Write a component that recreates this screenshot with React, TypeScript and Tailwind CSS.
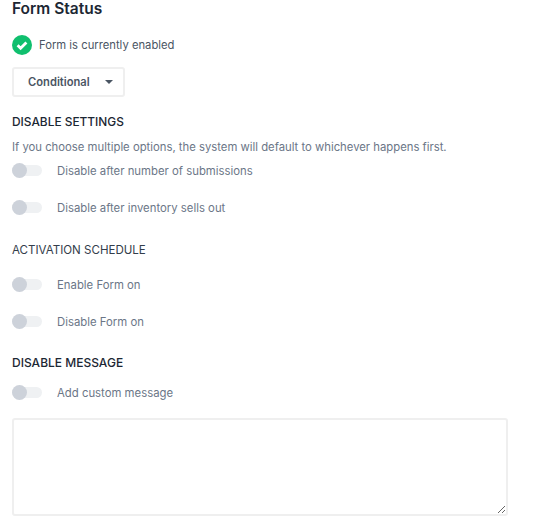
function Toggle({ label, className }: { label: string; className: string }) {
  return (
    <div className={`flex h-[16px] ${className}`}>
      <span className="relative block mt-[2px] w-[30px] h-[11px] rounded-full bg-[#eff1f3]">
        <span className="absolute left-0 top-[-2px] w-[15px] h-[15px] rounded-full bg-[#cdd2da]" />
      </span>
      <span className="ml-[15px] text-[11.35px] leading-[16px] text-[#6b7687]">{label}</span>
    </div>
  );
}

export default function App() {
  return (
    <div className="w-[547px] h-[530px] overflow-hidden bg-white pl-[12px] font-['Inter','Liberation_Sans',sans-serif]">
      <h1 className="pt-[1px] h-[20px] text-[15.5px] leading-[16px] font-semibold text-[#1c2733]">Form Status</h1>
      <div className="mt-[15px] flex items-center h-[20px]">
        <svg width="20" height="20" viewBox="0 0 20 20">
          <circle cx="10" cy="10" r="10" fill="#10bf6e" />
          <path d="M5.6 10.2 8.6 13.2 14.4 7.4" fill="none" stroke="#fff" strokeWidth="2.8" />
        </svg>
        <span className="ml-[7px] text-[11.25px] leading-[16px] text-[#4a5563]">Form is currently enabled</span>
      </div>
      <div className="mt-[12px] flex items-center w-[113px] h-[30px] border-2 border-[#efefef] rounded-[3px] pl-[14px]">
        <span className="text-[11.2px] leading-[16px] font-semibold text-[#4a5563]">Conditional</span>
        <span className="ml-[15px] w-0 h-0 border-x-[4px] border-x-transparent border-t-[4px] border-t-[#4a5563]" />
      </div>
      <h2 className="mt-[17px] h-[16px] text-[11.9px] leading-[16px] font-medium text-[#1c2733]">DISABLE SETTINGS</h2>
      <p className="mt-[9px] h-[16px] text-[11.3px] leading-[16px] text-[#6b7687]">
        If you choose multiple options, the system will default to whichever happens first.
      </p>
      <Toggle className="mt-[8px]" label="Disable after number of submissions" />
      <Toggle className="mt-[21px]" label="Disable after inventory sells out" />
      <h2 className="mt-[26px] h-[16px] text-[11.55px] leading-[16px] text-[#333d4b]">ACTIVATION SCHEDULE</h2>
      <Toggle className="mt-[19px]" label="Enable Form on" />
      <Toggle className="mt-[21px]" label="Disable Form on" />
      <h2 className="mt-[25px] h-[16px] text-[12px] leading-[16px] font-medium text-[#1c2733]">DISABLE MESSAGE</h2>
      <Toggle className="mt-[14px]" label="Add custom message" />
      <textarea className="block mt-[17px] w-[496px] h-[98px] border-2 border-[#efefef] rounded-[3px] outline-none" />
    </div>
  );
}
